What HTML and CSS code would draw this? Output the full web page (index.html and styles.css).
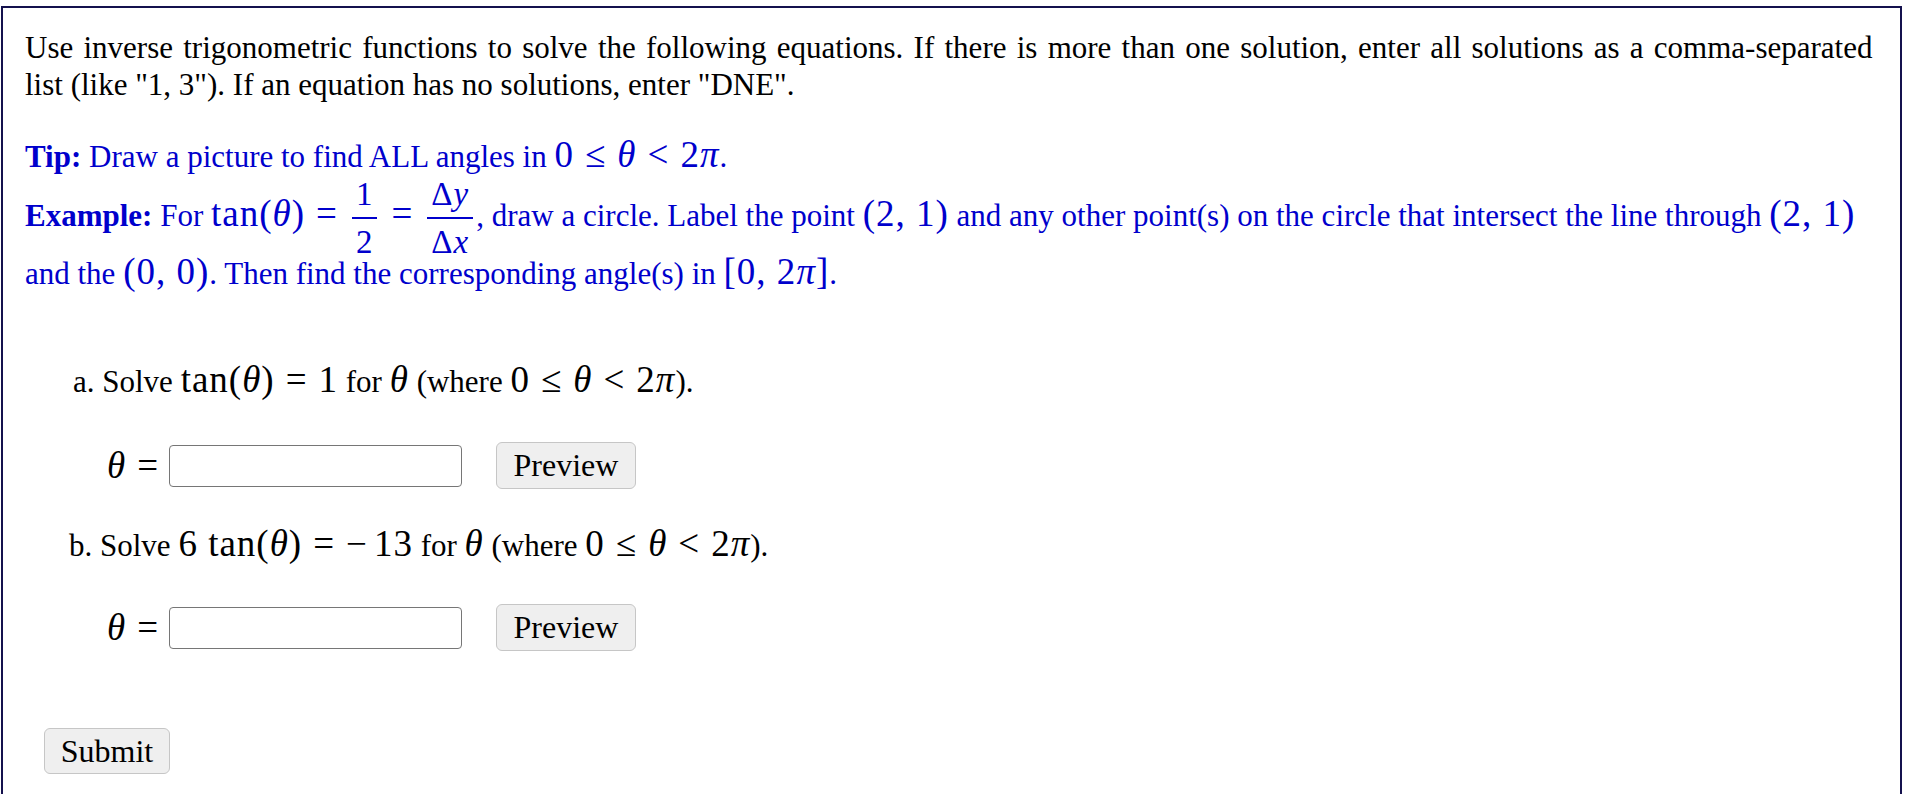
FILE: index.html
```html
<!DOCTYPE html>
<html>
<head>
<meta charset="utf-8">
<link rel="stylesheet" href="styles.css">
</head>
<body>
<div class="box">
  <p class="intro"><span class="wide">Use inverse trigonometric functions to solve the following equations. If there is more than one solution, enter all solutions as a comma-separated</span><br>list (like "1, 3"). If an equation has no solutions, enter "DNE".</p>
  <div class="tip">
    <p class="tipline"><b>Tip:</b> Draw a picture to find ALL angles in <span class="m">0<span class="rel">≤</span><i>θ</i><span class="rel">&lt;</span>2<i>π</i></span>.</p>
    <p class="example"><b>Example:</b> For <span class="m">tan(<i>θ</i>)<span class="rel">=</span><span class="frac"><span class="num">1</span><span class="den">2</span></span><span class="rel">=</span><span class="frac"><span class="num">Δ<i>y</i></span><span class="den">Δ<i>x</i></span></span></span>, draw a circle. Label the point <span class="m">(2, 1)</span> and any other point(s) on the circle that intersect the line through <span class="m">(2, 1)</span><br>and the <span class="m">(0, 0)</span>. Then find the corresponding angle(s) in <span class="m">[0, 2<i>π</i>]</span>.</p>
  </div>
  <div class="part">
    <p class="q">a. Solve <span class="m">tan(<i>θ</i>)<span class="rel">=</span>1</span> for <span class="m"><i>θ</i></span> (where <span class="m">0<span class="rel">≤</span><i>θ</i><span class="rel">&lt;</span>2<i>π</i></span>).</p>
    <div class="answer">
      <span class="lbl m"><i>θ</i><span class="rel">=</span></span>
      <input class="field" type="text">
      <button class="btn preview">Preview</button>
    </div>
  </div>
  <div class="part partb">
    <p class="q qb">b. Solve <span class="m">6 tan(<i>θ</i>)<span class="rel">=</span><span class="minus">−</span>13</span> for <span class="m"><i>θ</i></span> (where <span class="m">0<span class="rel">≤</span><i>θ</i><span class="rel">&lt;</span>2<i>π</i></span>).</p>
    <div class="answer answerb">
      <span class="lbl m"><i>θ</i><span class="rel">=</span></span>
      <input class="field" type="text">
      <button class="btn preview">Preview</button>
    </div>
  </div>
  <div class="submitrow">
    <button class="btn submit">Submit</button>
  </div>
</div>
</body>
</html>
```
FILE: styles.css
```css
html, body {
  margin: 0;
  padding: 0;
  background: #ffffff;
}
body {
  font-family: "Liberation Serif", "Times New Roman", serif;
  font-size: 31px;
  line-height: 37px;
  color: #000000;
}
.box {
  margin: 6px 8px 0 1px;
  border: 2px solid #14114d;
  border-bottom: none;
  padding: 21px 10px 0 22px;
  height: 800px;
  box-sizing: border-box;
}
p {
  margin: 0;
  white-space: nowrap;
}
.intro {
  margin-bottom: 35px;
}
.wide {
  word-spacing: 2.5px;
}
.tip {
  color: #0000cc;
}
.tip b {
  font-weight: bold;
}
.tipline {
  margin-bottom: 12px;
}
.example {
  line-height: 58px;
}
.m {
  font-family: "Liberation Serif", serif;
  font-size: 37px;
  line-height: 30px;
  letter-spacing: 1px;
}
.m i {
  font-style: italic;
}
.rel {
  margin: 0 11px;
}
.minus {
  margin-right: 6px;
}
.frac {
  display: inline-flex;
  flex-direction: column;
  align-items: center;
  vertical-align: middle;
  margin: -16px 3px;
  font-size: 33px;
  letter-spacing: 1px;
}
.frac .num {
  align-self: stretch;
  text-align: center;
  border-bottom: 2px solid currentColor;
  padding: 0 4px 6px;
  line-height: 34px;
}
.frac .den {
  line-height: 34px;
  padding-top: 6px;
}
.part {
  padding-left: 48px;
  margin-top: 60px;
}
.partb {
  margin-top: 38px;
}
.qb {
  margin-left: -4px;
}
.answer {
  display: flex;
  align-items: center;
  margin-top: 42px;
  padding-left: 34px;
}
.answerb {
  margin-top: 40px;
}
.lbl {
  width: 62px;
  flex: none;
  white-space: nowrap;
  line-height: 37px;
}
.lbl .rel {
  margin: 0 0 0 11px;
}
.field {
  width: 293px;
  height: 42px;
  box-sizing: border-box;
  border: 1.5px solid #767676;
  border-radius: 4px;
  margin: 0;
  padding: 0 8px;
  background: #fff;
  font-size: 24px;
}
.btn {
  font-family: "Liberation Serif", "Times New Roman", serif;
  font-size: 32px;
  color: #000;
  background: #efefef;
  border: 1.5px solid #c6c6c6;
  border-radius: 6px;
  margin: 0;
  padding: 0;
  box-sizing: border-box;
}
.preview {
  width: 140px;
  height: 47px;
  margin-left: 34px;
}
.submitrow {
  margin-top: 77px;
  padding-left: 19px;
}
.submit {
  width: 126px;
  height: 46px;
}
```
